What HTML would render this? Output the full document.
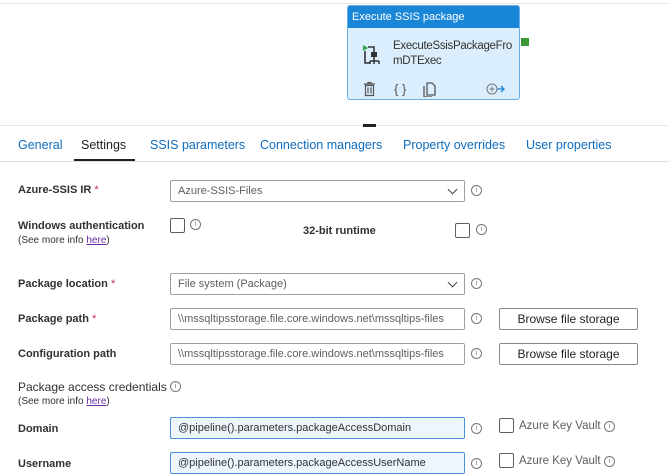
<!DOCTYPE html>
<html><head><style>
body{margin:0;width:669px;height:476px;overflow:hidden;background:#fff;font-family:"Liberation Sans",sans-serif;color:#323130;position:relative}
.a{position:absolute}
.lbl{position:absolute;left:18px;font-size:11px;font-weight:bold;color:#323130}
.lbl .r{color:#c4314b;font-weight:normal}
.box{position:absolute;left:170px;border:1px solid #a19f9d;border-radius:2px;font-size:11px;color:#605e5c;line-height:20px;padding-left:7px;box-sizing:border-box;width:295px;height:22px;overflow:hidden;white-space:nowrap}
.blue{background:#eef6fd;border-color:#4a90d9;color:#323130}
.info{position:absolute;width:9px;height:9px;border:1px solid #777;border-radius:50%;font-size:7px;line-height:9px;text-align:center;color:#777}
.cb{position:absolute;width:15px;height:15px;border:1px solid #605e5c;border-radius:2px;box-sizing:border-box;background:#fff}
.btn{position:absolute;left:499px;width:139px;height:22px;border:1px solid #8a8886;border-radius:2px;box-sizing:border-box;font-size:12px;text-align:center;line-height:20px;color:#201f1e}
.tab{position:absolute;top:138px;font-size:12.5px;color:#0f6cbd}
.small{position:absolute;left:18px;font-size:10px;color:#323130}
.small u{color:#6a2ea0}
.chev{position:absolute;left:449px;width:6px;height:6px;border-right:1.3px solid #444;border-bottom:1.3px solid #444;transform:rotate(45deg)}
</style></head><body>
<div class="a" style="left:0;top:3px;width:669px;height:1px;background:#e8e8e8"></div>
<div class="a" style="left:0;top:125px;width:669px;height:1px;background:#e8e8e8"></div>
<div class="a" style="left:363px;top:124px;width:13px;height:3px;background:#222"></div>
<div class="a" style="left:347px;top:5px;width:173px;height:95px;background:#dbeefd;border:1px solid #6aaee6;border-radius:3px;box-sizing:border-box;overflow:hidden">
 <div style="height:22px;background:#1a86d8;color:#fff;font-size:11px;line-height:22px;padding-left:4px">Execute SSIS package</div>
 <div class="a" style="left:45px;top:33px;font-size:11.5px;letter-spacing:-0.3px;color:#323130;line-height:15px">ExecuteSsisPackageFro<br>mDTExec</div>
 <svg class="a" style="left:14px;top:38px" width="22" height="24" viewBox="0 0 22 24"><path d="M1 1l5 3-5 3z" fill="#2ea84a"/><path d="M3 7v12h5" stroke="#333" stroke-width="1.6" fill="none"/><path d="M6 3h6v5" stroke="#333" stroke-width="1.6" fill="none"/><rect x="9" y="8" width="6" height="5" fill="#333"/><path d="M12 13v3M8 17h9M8 17v3M17 17v3M12 16v4" stroke="#333" stroke-width="1.5"/></svg>
 <svg class="a" style="left:15px;top:75px" width="80" height="16"><path d="M1 3h11M5 3v-1.5h3v1.5M2.5 4.5h8v10h-8z M5 6.5v6M8 6.5v6" stroke="#555" stroke-width="1.2" fill="none"/><text x="31" y="12.5" font-size="13" fill="#555" font-family="Liberation Sans">{ }</text><path d="M64 2h5l3 3v9h-8z M61 5v11h8" stroke="#555" stroke-width="1.3" fill="none"/></svg>
 <svg class="a" style="left:138px;top:76px" width="20" height="14"><circle cx="6" cy="7" r="5" stroke="#777" fill="none"/><path d="M3.5 7h5M6 4.5v5" stroke="#777"/><path d="M11 7h7M15 4l3 3-3 3" stroke="#1a86d8" stroke-width="1.3" fill="none"/></svg>
</div>
<div class="a" style="left:521px;top:38px;width:8px;height:8px;background:#3a9a3a"></div>
<div class="tab" style="left:18px">General</div>
<div class="tab" style="left:81px;color:#201f1e">Settings</div>
<div class="tab" style="left:150px">SSIS parameters</div>
<div class="tab" style="left:260px">Connection managers</div>
<div class="tab" style="left:403px">Property overrides</div>
<div class="tab" style="left:526px">User properties</div>
<div class="a" style="left:0;top:161px;width:669px;height:1px;background:#e1dfdd"></div>
<div class="a" style="left:74px;top:159px;width:61px;height:2px;background:#201f1e"></div>

<div class="lbl" style="top:184px">Azure-SSIS IR <span class="r">*</span></div>
<div class="box" style="top:180px">Azure-SSIS-Files</div><div class="chev" style="top:186px"></div>
<div class="info" style="left:471px;top:185px">i</div>

<div class="lbl" style="top:220px">Windows authentication</div>
<div class="small" style="top:235px">(See more info <u>here</u>)</div>
<div class="cb" style="left:170px;top:218px"></div><div class="info" style="left:190px;top:219px">i</div>
<div class="lbl" style="left:303px;top:225px">32-bit runtime</div>
<div class="cb" style="left:455px;top:223px"></div><div class="info" style="left:476px;top:224px">i</div>

<div class="lbl" style="top:278px">Package location <span class="r">*</span></div>
<div class="box" style="top:273px">File system (Package)</div><div class="chev" style="top:279px"></div>
<div class="info" style="left:471px;top:278px">i</div>

<div class="lbl" style="top:313px">Package path <span class="r">*</span></div>
<div class="box" style="top:308px">\\mssqltipsstorage.file.core.windows.net\mssqltips-files</div>
<div class="info" style="left:471px;top:313px">i</div>
<div class="btn" style="top:308px">Browse file storage</div>

<div class="lbl" style="top:348px">Configuration path</div>
<div class="box" style="top:343px">\\mssqltipsstorage.file.core.windows.net\mssqltips-files</div>
<div class="info" style="left:471px;top:348px">i</div>
<div class="btn" style="top:343px">Browse file storage</div>

<div class="a" style="left:18px;top:380px;font-size:12px">Package access credentials</div>
<div class="info" style="left:170px;top:381px">i</div>
<div class="small" style="top:396px">(See more info <u>here</u>)</div>

<div class="lbl" style="top:423px">Domain</div>
<div class="box blue" style="top:417px">@pipeline().parameters.packageAccessDomain</div>
<div class="info" style="left:471px;top:423px">i</div>
<div class="cb" style="left:499px;top:418px"></div>
<div class="a" style="left:519px;top:420px;font-size:11.5px;color:#605e5c">Azure Key Vault</div>
<div class="info" style="left:604px;top:421px">i</div>

<div class="lbl" style="top:458px">Username</div>
<div class="box blue" style="top:452px">@pipeline().parameters.packageAccessUserName</div>
<div class="info" style="left:471px;top:458px">i</div>
<div class="cb" style="left:499px;top:453px"></div>
<div class="a" style="left:519px;top:455px;font-size:11.5px;color:#605e5c">Azure Key Vault</div>
<div class="info" style="left:604px;top:456px">i</div>
</body></html>
